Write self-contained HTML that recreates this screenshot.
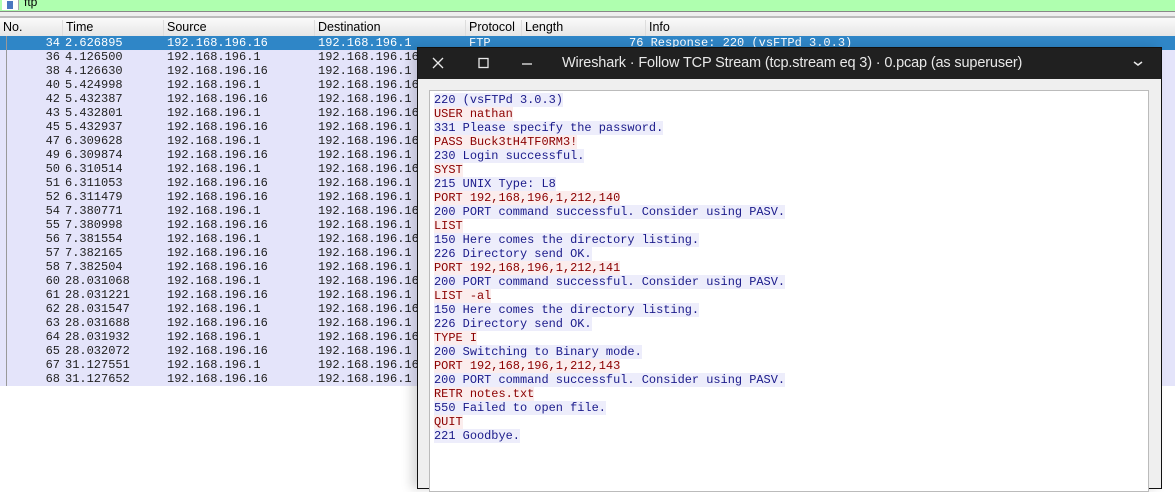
<!DOCTYPE html>
<html><head><style>
body{margin:0;width:1175px;height:482px;overflow:hidden;background:#fff;position:relative;font-family:"Liberation Sans",sans-serif}
.filter{position:absolute;left:0;top:0;width:1175px;height:11px;background:#afffaf;border-bottom:1px solid #888}
.filter span{position:absolute;left:24px;top:-5px;font-size:12px}
.bm{position:absolute;left:2px;top:0;width:16px;height:10px;background:#fff;border-right:1px solid #aaa}
.bm:after{content:"";position:absolute;left:5px;top:1px;width:6px;height:8px;background:#4a78c0}
.gap{position:absolute;left:0;top:12px;width:1175px;height:4px;background:#eee;border-bottom:2px solid #bbb}
.hdr{position:absolute;left:0;top:18px;width:1175px;height:18px;background:linear-gradient(#fafafa,#e6e6e6);border-bottom:1px solid #bbb;font-size:12.5px;color:#000}
.hdr div{position:absolute;top:2px;height:16px;border-left:1px solid #ddd;padding-left:3px}
.rows{position:absolute;left:0;top:36px;width:1175px}
.r{height:14px;background:#e4e4fa;position:relative;font-family:"Liberation Mono",monospace;font-size:12px;line-height:14px;color:#222}
.r.sel{background:#2f86c7;color:#fff}
.r span{position:absolute;top:0;white-space:pre}
.vl{position:absolute;left:6px;top:36px;width:1px;height:350px;background:#999}
.dlg{position:absolute;left:417px;top:47px;width:743px;height:440px;background:#efefef;border:1px solid #111;box-shadow:-6px 0 10px rgba(0,0,0,.15)}
.tb{height:31px;background:#202020;color:#e8e8e8;position:relative}
.tb .t{position:absolute;left:144px;top:7px;font-size:14.5px;letter-spacing:-.15px}
.frame{position:absolute;left:11px;top:42px;width:718px;height:400px;background:#fff;border:1px solid #bbb}
.txt{position:absolute;left:4px;top:2px;font-family:"Liberation Mono",monospace;font-size:11.95px;line-height:14px}
.txt div{height:14px}
.txt span{white-space:pre}
.c{background:#fbeded;color:#8b0000}
.s{background:#ededfb;color:#1a1a8a}
</style></head><body>
<div class="filter"><div class="bm"></div><span>ftp</span></div>
<div class="gap"></div>
<div class="hdr">
<div style="left:0;border:0">No.</div><div style="left:62px">Time</div><div style="left:163px">Source</div><div style="left:314px">Destination</div><div style="left:465px">Protocol</div><div style="left:521px">Length</div><div style="left:645px">Info</div>
</div>
<div class="rows" id="rows"></div>
<div class="vl"></div>
<div class="dlg">
<div class="tb">
<svg width="140" height="31" style="position:absolute;left:0;top:0" stroke="#e8e8e8" stroke-width="1.3" fill="none"><path d="M15 10l10 10M25 10l-10 10"/><rect x="61" y="10.5" width="9" height="9"/><path d="M104 16h10"/></svg>
<div class="t">Wireshark · Follow TCP Stream (tcp.stream eq 3) · 0.pcap (as superuser)</div>
<svg width="12" height="8" style="position:absolute;left:714px;top:12px" stroke="#e8e8e8" stroke-width="1.5" fill="none"><path d="M2 2l4 3 4-3"/></svg>
</div>
<div class="frame"><div class="txt">
<div><span class="s">220 (vsFTPd 3.0.3)</span></div>
<div><span class="c">USER nathan</span></div>
<div><span class="s">331 Please specify the password.</span></div>
<div><span class="c">PASS Buck3tH4TF0RM3!</span></div>
<div><span class="s">230 Login successful.</span></div>
<div><span class="c">SYST</span></div>
<div><span class="s">215 UNIX Type: L8</span></div>
<div><span class="c">PORT 192,168,196,1,212,140</span></div>
<div><span class="s">200 PORT command successful. Consider using PASV.</span></div>
<div><span class="c">LIST</span></div>
<div><span class="s">150 Here comes the directory listing.</span></div>
<div><span class="s">226 Directory send OK.</span></div>
<div><span class="c">PORT 192,168,196,1,212,141</span></div>
<div><span class="s">200 PORT command successful. Consider using PASV.</span></div>
<div><span class="c">LIST -al</span></div>
<div><span class="s">150 Here comes the directory listing.</span></div>
<div><span class="s">226 Directory send OK.</span></div>
<div><span class="c">TYPE I</span></div>
<div><span class="s">200 Switching to Binary mode.</span></div>
<div><span class="c">PORT 192,168,196,1,212,143</span></div>
<div><span class="s">200 PORT command successful. Consider using PASV.</span></div>
<div><span class="c">RETR notes.txt</span></div>
<div><span class="s">550 Failed to open file.</span></div>
<div><span class="c">QUIT</span></div>
<div><span class="s">221 Goodbye.</span></div>
</div></div>
</div>
<script>
var d=[[34,"2.626895",16],[36,"4.126500",1],[38,"4.126630",16],[40,"5.424998",1],[42,"5.432387",16],[43,"5.432801",1],[45,"5.432937",16],[47,"6.309628",1],[49,"6.309874",16],[50,"6.310514",1],[51,"6.311053",16],[52,"6.311479",16],[54,"7.380771",1],[55,"7.380998",16],[56,"7.381554",1],[57,"7.382165",16],[58,"7.382504",16],[60,"28.031068",1],[61,"28.031221",16],[62,"28.031547",1],[63,"28.031688",16],[64,"28.031932",1],[65,"28.032072",16],[67,"31.127551",1],[68,"31.127652",16]];
var h="";d.forEach(function(x,i){var s="192.168.196."+x[2],t="192.168.196."+(x[2]==16?1:16);
h+='<div class="r'+(i==0?' sel':'')+'"><span style="right:1115px">'+x[0]+'</span><span style="left:65px">'+x[1]+'</span><span style="left:167px">'+s+'</span><span style="left:318px">'+t+'</span>'+(i==0?'<span style="left:469px">FTP</span><span style="left:629px">76 Response: 220 (vsFTPd 3.0.3)</span>':'')+'</div>';});
document.getElementById("rows").innerHTML=h;
</script>
</body></html>
